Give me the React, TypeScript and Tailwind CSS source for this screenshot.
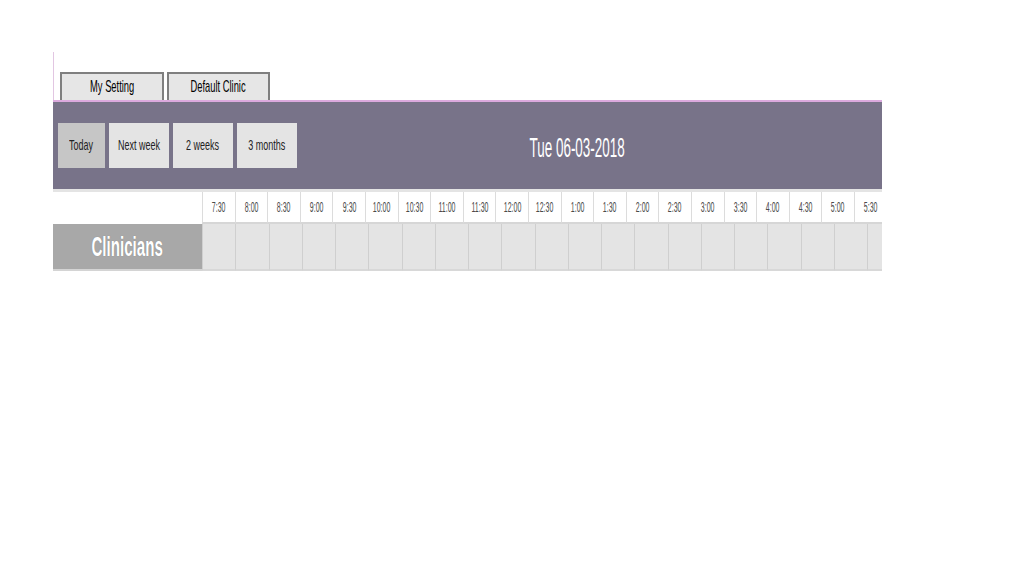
import React from 'react';

const TIMES = [
  '7:30', '8:00', '8:30', '9:00', '9:30', '10:00', '10:30', '11:00', '11:30', '12:00', '12:30',
  '1:00', '1:30', '2:00', '2:30', '3:00', '3:30', '4:00', '4:30', '5:00', '5:30',
];

const RANGES = ['Today', 'Next week', '2 weeks', '3 months'];

const font = { fontFamily: '"Liberation Sans", Arial, sans-serif' };

// the old page draws everything in a very narrow face, so squeeze the text
function Narrow({ children, className = '' }: { children: React.ReactNode; className?: string }) {
  return <span className={`inline-block whitespace-nowrap ${className}`}>{children}</span>;
}

export default function App() {
  return (
    <div className="w-full h-[576px] bg-white pt-[52px]" style={font}>
      <div className="ml-[53px] w-[829px] overflow-hidden">
        {/* settings tabs */}
        <div className="h-[48px] border-l border-[#e2c6e2] flex items-end pl-[6px] gap-[3px]">
          <button className="w-[104px] h-[28px] bg-[#e6e6e6] border-2 border-[#7f7f7f] border-b-0 text-black flex items-center justify-center">
            <Narrow className="text-[17px] scale-x-[0.55]">My Setting</Narrow>
          </button>
          <button className="w-[103px] h-[28px] bg-[#e6e6e6] border-2 border-[#7f7f7f] border-b-0 text-black flex items-center justify-center">
            <Narrow className="text-[17px] scale-x-[0.55]">Default Clinic</Narrow>
          </button>
        </div>

        {/* date band */}
        <div className="h-[89px] bg-[#787389] border-t-2 border-[#dcaade] flex items-center pl-[5px]">
          <div className="flex gap-[4px]">
            {RANGES.map((r, i) => (
              <button
                key={r}
                className={`h-[45px] text-[#222] flex items-center justify-center ${i === 0 ? 'w-[47px] bg-[#c6c6c6]' : 'w-[60px] bg-[#e4e4e4]'}`}
              >
                <Narrow className="text-[15px] scale-x-[0.6]">{r}</Narrow>
              </button>
            ))}
          </div>
          <div className="flex-1 flex justify-center text-white pr-[24px] pt-[4px]">
            <Narrow className="text-[28px] scale-x-[0.48]">Tue 06-03-2018</Narrow>
          </div>
        </div>

        {/* schedule grid */}
        <div className="border-t-[3px] border-[#e4e4e4]">
          <div className="flex h-[32px]">
            <div className="w-[149px] shrink-0 bg-white" />
            {TIMES.map((t) => (
              <div
                key={t}
                className="w-[32.6px] shrink-0 border-l border-[#dcdcdc] border-b-2 border-b-[#d6d6d6] bg-white flex items-center justify-center text-[#4a4a4a]"
              >
                <Narrow className="text-[14px] scale-x-[0.5]">{t}</Narrow>
              </div>
            ))}
          </div>
          <div className="flex h-[47px]">
            <div className="w-[149px] shrink-0 bg-[#a8a8a8] border-b-2 border-[#d4d4d4] flex items-center justify-center text-white font-bold [text-shadow:0_0_1px_#777]">
              <Narrow className="text-[28px] scale-x-[0.54]">Clinicians</Narrow>
            </div>
            {TIMES.map((t) => (
              <div
                key={t}
                className="w-[33.25px] shrink-0 bg-[#e4e4e4] border-l border-[#cfcfcf] border-b-2 border-b-[#d8d8d8]"
              />
            ))}
          </div>
        </div>
      </div>
    </div>
  );
}
